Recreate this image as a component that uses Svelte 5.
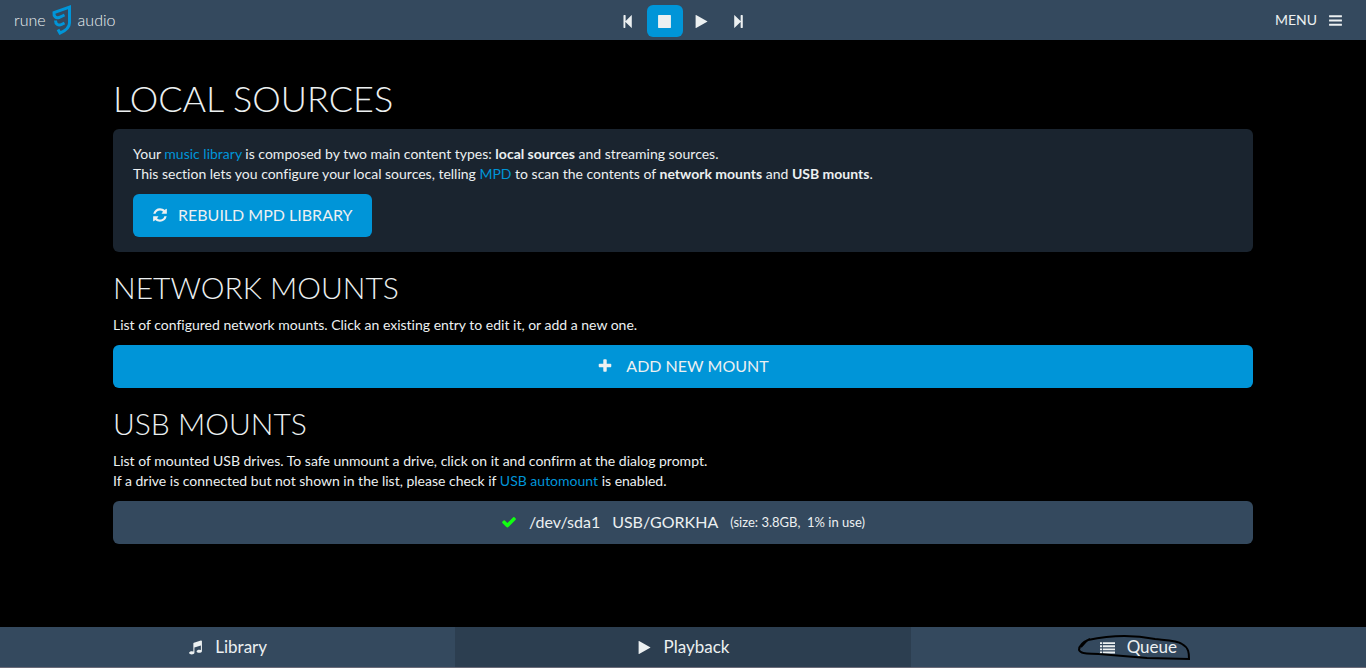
<script lang="ts">
  // Font glyph outlines on a 1792 grid
  const icons = {
    prev: "M1363 141q19-19 32-13t13 32v1472q0 26-13 32t-32-13l-710-710q-9-9-13-19v678q0 26-19 45t-45 19H480q-26 0-45-19t-19-45V192q0-26 19-45t45-19h128q26 0 45 19t19 45v678q4-11 13-19z",
    stop: "M1664 192v1408q0 26-19 45t-45 19H192q-26 0-45-19t-19-45V192q0-26 19-45t45-19h1408q26 0 45 19t19 45z",
    play: "M1576 927L248 1665q-23 13-39.5 3t-16.5-36V160q0-26 16.5-36t39.5 3l1328 738q23 13 23 31t-23 31z",
    next: "M429 1651q-19 19-32 13t-13-32V160q0-26 13-32t32 13l710 710q9 8 13 19V192q0-26 19-45t45-19h128q26 0 45 19t19 45v1408q0 26-19 45t-45 19h-128q-26 0-45-19t-19-45V922q-4 10-13 19z",
    bars: "M1664 1344v128q0 26-19 45t-45 19H192q-26 0-45-19t-19-45v-128q0-26 19-45t45-19h1408q26 0 45 19t19 45zm0-512v128q0 26-19 45t-45 19H192q-26 0-45-19t-19-45V832q0-26 19-45t45-19h1408q26 0 45 19t19 45zm0-512v128q0 26-19 45t-45 19H192q-26 0-45-19t-19-45V320q0-26 19-45t45-19h1408q26 0 45 19t19 45z",
    refresh: "M1639 1056q0 5-1 7-64 268-268 434.5T892 1664q-146 0-282.5-55T366 1452l-129 129q-19 19-45 19t-45-19-19-45v-448q0-26 19-45t45-19h448q26 0 45 19t19 45-19 45l-137 137q71 66 161 102t187 36q134 0 250-65t186-179q11-17 53-117 8-23 30-23h192q13 0 22.500 9.500t9.500 22.500zm25-800v448q0 26-19 45t-45 19h-448q-26 0-45-19t-19-45 19-45l138-138Q1097 384 896 384q-134 0-250 65T460 628q-11 17-53 117-8 23-30 23H178q-13 0-22.500-9.500T146 736v-7q65-268 270-434.500T896 128q146 0 284 55.500T1425 340l130-129q19-19 45-19t45 19 19 45z",
    plus: "M1600 736v192q0 40-28 68t-68 28h-416v416q0 40-28 68t-68 28H800q-40 0-68-28t-28-68v-416H288q-40 0-68-28t-28-68V736q0-40 28-68t68-28h416V224q0-40 28-68t68-28h192q40 0 68 28t28 68v416h416q40 0 68 28t28 68z",
    check: "M1671 566q0 40-28 68l-724 724-136 136q-28 28-68 28t-68-28l-136-136-362-362q-28-28-28-68t28-68l136-136q28-28 68-28t68 28l294 295 656-657q28-28 68-28t68 28l136 136q28 28 28 68z",
    music: "M1664 224v1120c0 130-190 192-320 192s-320-62-320-192 190-192 320-192q105 0 192 39V655L768 892v644c0 130-190 192-320 192s-320-62-320-192 190-192 320-192q105 0 192 39V416q0-31 19-56.500t49-35.500l832-256q12-4 28-4 40 0 68 28t28 68z",
    list: "M0 1380h256v220H0zM0 1010h256v220H0zM0 640h256v220H0zM0 270h256v220H0zM352 1380h1440v220H352zM352 1010h1440v220H352zM352 640h1440v220H352zM352 270h1440v220H352z",
  };

  const controls = [
    { icon: icons.prev, label: "Previous" },
    { icon: icons.stop, label: "Stop" },
    { icon: icons.play, label: "Play" },
    { icon: icons.next, label: "Next" },
  ];

  const tabs = [
    { id: "library", icon: icons.music, label: "Library" },
    { id: "playback", icon: icons.play, label: "Playback" },
    { id: "queue", icon: icons.list, label: "Queue" },
  ];

  let state = $state({ control: "Stop", tab: "playback" });
</script>

{#snippet icon(d: string)}
  <svg class="icon" viewBox="0 0 1792 1792" aria-hidden="true"><path {d} /></svg>
{/snippet}

<div class="page">
  <header class="topbar">
    <a class="logo" href="#home">
      <span>rune</span>
      <svg viewBox="0 0 20 30" aria-hidden="true">
        <path d="M12.500 10L7 12.500C4 13.500 1.500 11.500 2 7.500L17.500 2.200V18c0 5-3.500 7.500-9.500 10L6 24.500" />
        <path d="M3.500 15.500c0 4 3 5.500 6 4l3-1.500" />
      </svg>
      <span>audio</span>
    </a>
    <div class="controls">
      {#each controls as c}
        <button
          class="control"
          class:active={state.control === c.label}
          aria-label={c.label}
          onclick={() => (state.control = c.label)}
        >
          {@render icon(c.icon)}
        </button>
      {/each}
    </div>
    <button class="menu">MENU {@render icon(icons.bars)}</button>
  </header>

  <main class="container">
    <h1>LOCAL SOURCES</h1>
    <div class="boxed">
      <p>
        Your <a href="#library">music library</a> is composed by two main content types: <strong>local sources</strong> and streaming sources.<br />
        This section lets you configure your local sources, telling <a href="#mpd">MPD</a> to scan the contents of <strong>network mounts</strong> and <strong>USB mounts</strong>.
      </p>
      <button class="btn btn-primary">{@render icon(icons.refresh)}<span>REBUILD MPD LIBRARY</span></button>
    </div>

    <h2>NETWORK MOUNTS</h2>
    <p>List of configured network mounts. Click an existing entry to edit it, or add a new one.</p>
    <button class="btn btn-primary btn-block add">{@render icon(icons.plus)}<span>ADD NEW MOUNT</span></button>

    <h2>USB MOUNTS</h2>
    <p>
      List of mounted USB drives. To safe unmount a drive, click on it and confirm at the dialog prompt.<br />
      If a drive is connected but not shown in the list, please check if <a href="#settings">USB automount</a> is enabled.
    </p>
    <button class="btn btn-block drive">
      {@render icon(icons.check)}
      <span>/dev/sda1</span>
      <span>USB/GORKHA</span>
      <small>(size: 3.8GB,&nbsp; 1% in use)</small>
    </button>
  </main>

  <nav class="tabs">
    {#each tabs as t}
      <a
        class="tab"
        class:active={state.tab === t.id}
        href="#{t.id}"
        onclick={() => (state.tab = t.id)}
      >
        <span class="tab-label">
          {@render icon(t.icon)}
          {t.label}
          {#if t.id === "queue"}
            <svg class="scribble" viewBox="0 0 114 28" aria-hidden="true">
              <path d="M13 5C6 8 2 12 2 16c2 5 12 3 20 4l48 4 42 1c0-6 0-11-7-15-5-4-20-4-27-5C58 1 34 1 11 6c-3 2-5 5-7 7" />
            </svg>
          {/if}
        </span>
      </a>
    {/each}
  </nav>
</div>

<style>
  :global(body) {
    background: #000;
    color: #ecf0f1;
    font: 14px/20px Lato, "Liberation Sans", sans-serif;
    font-variant-ligatures: none;
  }
  .page { min-height: 100vh; display: flex; flex-direction: column; }
  a { color: #0095d8; text-decoration: none; }
  button { font: inherit; color: inherit; border: 0; background: none; padding: 0; cursor: pointer; }
  .icon { width: 15px; height: 15px; fill: currentColor; flex-shrink: 0; }

  .topbar {
    display: grid;
    grid-template-columns: 1fr auto 1fr;
    align-items: center;
    height: 40px;
    padding: 0 14px;
    background: #34495e;
  }
  .logo {
    display: flex;
    align-items: center;
    gap: 6px;
    color: #ecf0f1;
    font-size: 16px;
    font-weight: 300;
  }
  .logo svg { width: 20px; height: 30px; fill: none; stroke: #0095d8; stroke-width: 3; }
  .controls { display: flex; gap: 1px; padding-top: 2px; }
  .control {
    display: flex;
    align-items: center;
    justify-content: center;
    width: 36px;
    height: 32px;
    border-radius: 6px;
  }
  .control.active { background: #0095d8; }
  .menu { display: flex; align-items: center; gap: 11px; justify-self: end; padding-right: 9px; }

  .container {
    flex: 1;
    box-sizing: border-box;
    width: 100%;
    max-width: 1170px;
    margin: 0 auto;
    padding: 38px 15px 20px;
  }
  h1, h2 { font-weight: 300; margin: 0; }
  h1 { font-size: 36px; line-height: 40px; margin-bottom: 11px; }
  h2 { font-size: 30px; line-height: 30px; margin: 20px 0 13px; }
  p { margin: 0 0 10px; }
  .boxed { background: #1a242f; border-radius: 6px; padding: 15px 20px; }

  .btn {
    display: inline-flex;
    align-items: center;
    justify-content: center;
    gap: 10px;
    box-sizing: border-box;
    height: 43px;
    padding: 0 19px 2px;
    border-radius: 6px;
    background: #34495e;
    font-size: 16px;
  }
  .btn .icon { width: 16px; height: 16px; }
  .btn-primary { background: #0095d8; }
  .btn-block { display: flex; width: 100%; }
  .add { gap: 13px; }
  .drive { gap: 12px; }
  .drive .icon { fill: #1f1; }
  .drive small { font-size: 13px; }

  .tabs {
    display: grid;
    grid-template-columns: repeat(3, 1fr);
    border-bottom: 1px solid #6b6b78;
  }
  .tab {
    display: flex;
    align-items: center;
    justify-content: center;
    height: 40px;
    background: #34495e;
    color: #ecf0f1;
    font-size: 17px;
  }
  .tab.active { background: #2c3e50; }
  .tab-label { position: relative; display: flex; align-items: center; gap: 12px; }
  .scribble {
    position: absolute;
    left: -23px;
    top: -3px;
    width: 114px;
    height: 28px;
    fill: none;
    stroke: #000;
    stroke-width: 2;
  }
</style>
